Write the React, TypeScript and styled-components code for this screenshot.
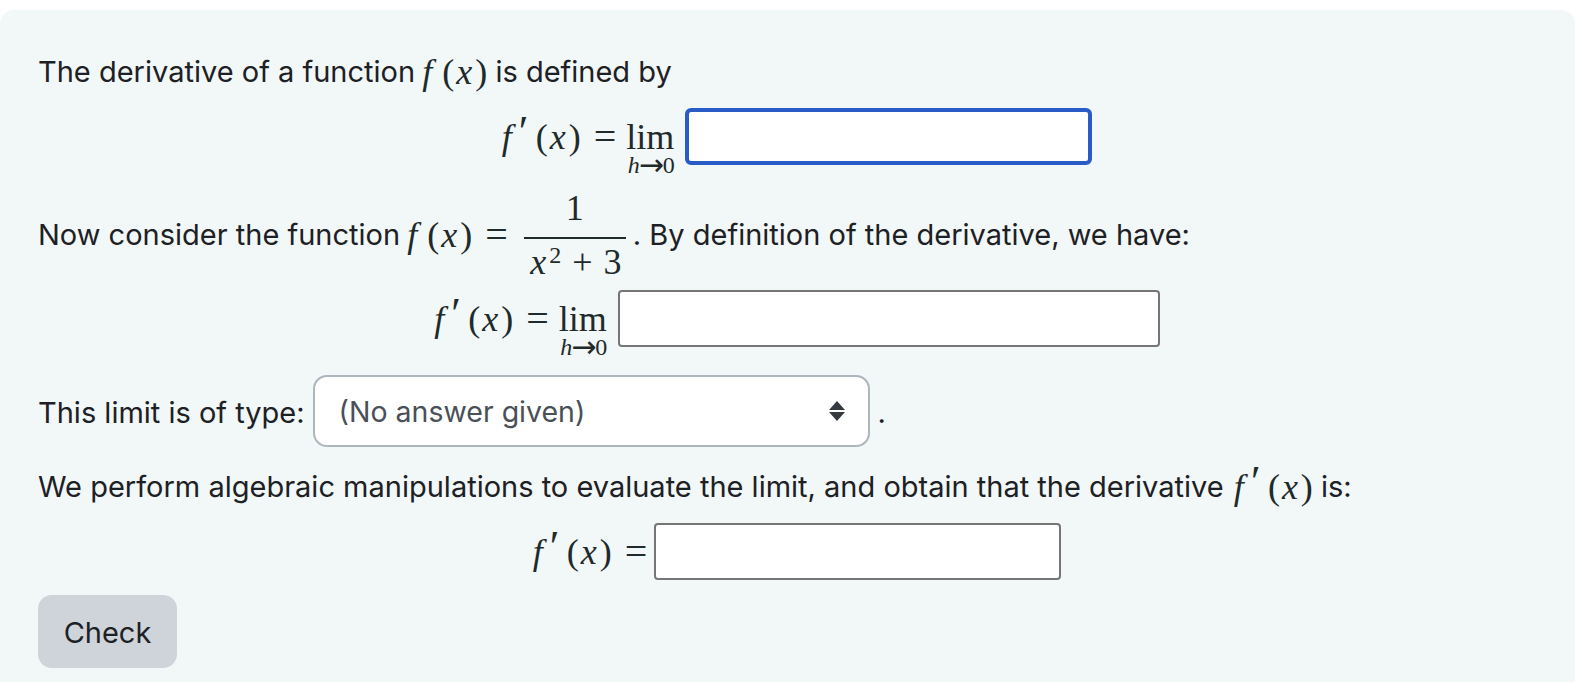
import * as React from 'react';
import styled, { createGlobalStyle } from 'styled-components';

const GlobalStyle = createGlobalStyle`
    html, body {
        margin: 0;
        padding: 0;
        height: 100%;
        background: #ffffff;
        overflow: hidden;
    }
    body {
        font-family: Inter, "Open Sans", sans-serif;
        color: #1d2125;
    }
`;

const Panel = styled.main`
    box-sizing: border-box;
    height: 672px;
    margin-top: 10px;
    padding: 39px 18px 0 38px;
    background: #f2f7f7;
    border-radius: 14px 14px 0 0;
    display: flex;
    flex-direction: column;
    font-size: 29px;
`;

const TextRow = styled.div<{ $top?: number }>`
    display: flex;
    align-items: center;
    height: 45px;
    margin-top: ${(props) => props.$top ?? 0}px;
    white-space: pre;
`;

const DisplayRow = styled.div<{ $top: number }>`
    display: flex;
    justify-content: center;
    align-items: flex-start;
    height: 57px;
    margin-top: ${(props) => props.$top}px;
`;

const MathText = styled.span`
    font-family: "Liberation Serif", serif;
    font-size: 36px;
    color: #1f2a2a;
    white-space: pre;
    display: inline-flex;
    align-items: center;
`;

const InlineDerivative = styled(MathText)`
    margin-left: 3px;
`;

const FName = styled.i<{ $gap?: number }>`
    font-style: italic;
    margin: 0 ${(props) => props.$gap ?? 5}px 0 -1px;
`;

const XName = styled.i`
    font-style: italic;
    margin: 0 3px 0 2px;
`;

const Prime = styled.span`
    display: inline-block;
    width: 10px;
    font-size: 44px;
    line-height: 1;
    margin: 0 7px 0 2px;
    transform: translateY(-5px);
`;

const Equals = styled.span<{ $tail?: boolean }>`
    font-size: 40px;
    line-height: 1;
    margin: 0 ${(props) => (props.$tail ? -4 : 10)}px 0 13px;
`;

const LimBlock = styled.span`
    display: inline-flex;
    flex-direction: column;
    align-items: center;
    height: 57px;
`;

const LimWord = styled.span`
    line-height: 40px;
    margin-top: 9px;
`;

const LimSub = styled.span`
    display: inline-flex;
    align-items: center;
    font-size: 24px;
    line-height: 24px;
    margin: -4px -3px 0 -1px;
`;

const LimVar = styled.i`
    font-style: italic;
`;

const Arrow = styled.span`
    font-family: "DejaVu Sans", sans-serif;
    font-size: 30px;
    margin: 0 -1px;
`;

const MathLine = styled(MathText)`
    height: 57px;
    margin-right: 11px;
`;

const Fraction = styled.span`
    display: inline-flex;
    flex-direction: column;
    align-items: center;
    width: 102px;
    margin: 0 7px 0 6px;
`;

const Numerator = styled.span`
    height: 48px;
    line-height: 38px;
`;

const Denominator = styled.span`
    align-self: stretch;
    text-align: center;
    border-top: 2px solid #1f2a2a;
    height: 42px;
    line-height: 46px;
`;

const Sup = styled.sup`
    font-size: 24px;
    line-height: 0;
    vertical-align: 11px;
`;

const Plus = styled.span`
    margin: 0 11px;
`;

const AnswerInput = styled.input<{ $width: number; $focused?: boolean }>`
    box-sizing: border-box;
    width: ${(props) => props.$width}px;
    height: 57px;
    background: #ffffff;
    border: ${(props) => (props.$focused ? '4px solid #2a5cc8' : '2px solid #767676')};
    border-radius: ${(props) => (props.$focused ? '6px' : '4px')};
    outline: none;
    padding: 0;
`;

const SelectWrap = styled.span`
    position: relative;
    display: inline-flex;
    margin: 0 8px 0 8px;
`;

const TypeSelect = styled.select`
    appearance: none;
    box-sizing: border-box;
    width: 557px;
    height: 72px;
    padding: 2px 24px 0;
    background: #ffffff;
    border: 2px solid #adb5bd;
    border-radius: 14px;
    color: #495057;
    font-family: Inter, "Open Sans", sans-serif;
    font-size: 28.5px;
    outline: none;
`;

const SelectArrows = styled.svg`
    position: absolute;
    right: 25px;
    top: 26px;
    width: 16px;
    height: 20px;
    pointer-events: none;
`;

const CheckButton = styled.button`
    box-sizing: border-box;
    align-self: flex-start;
    width: 139px;
    height: 73px;
    margin-top: 15px;
    background: #ced4da;
    border: none;
    border-radius: 14px;
    color: #1d2125;
    font-family: Inter, "Open Sans", sans-serif;
    font-size: 29px;
    padding: 2px 0 0;
`;

const TypeLabel = styled.span`
    padding-top: 3px;
`;

const FunctionOfX = () => (
    <MathText>
        <FName $gap={10}>f</FName>(<XName>x</XName>)
    </MathText>
);

const DerivativeOfX = () => (
    <>
        <FName>f</FName>
        <Prime>′</Prime>(<XName>x</XName>)
    </>
);

const Limit = () => (
    <LimBlock>
        <LimWord>lim</LimWord>
        <LimSub>
            <LimVar>h</LimVar>
            <Arrow>→</Arrow>0
        </LimSub>
    </LimBlock>
);

const App = (): JSX.Element => {
    return (
        <>
            <GlobalStyle />
            <Panel>
                <TextRow>
                    The derivative of a function <FunctionOfX /> is defined by
                </TextRow>
                <DisplayRow $top={14}>
                    <MathLine>
                        <DerivativeOfX />
                        <Equals>=</Equals>
                        <Limit />
                    </MathLine>
                    <AnswerInput $width={407} $focused aria-label="Difference quotient" />
                </DisplayRow>
                <TextRow $top={47}>
                    Now consider the function <FunctionOfX />
                    <MathText>
                        <Equals>=</Equals>
                        <Fraction>
                            <Numerator>1</Numerator>
                            <Denominator>
                                <XName>x</XName>
                                <Sup>2</Sup>
                                <Plus>+</Plus>3
                            </Denominator>
                        </Fraction>
                    </MathText>
                    . By definition of the derivative, we have:
                </TextRow>
                <DisplayRow $top={33}>
                    <MathLine>
                        <DerivativeOfX />
                        <Equals>=</Equals>
                        <Limit />
                    </MathLine>
                    <AnswerInput $width={542} aria-label="Limit expression" />
                </DisplayRow>
                <TextRow $top={41}>
                    <TypeLabel>This limit is of type:</TypeLabel>
                    <SelectWrap>
                        <TypeSelect aria-label="Limit type" defaultValue="none">
                            <option value="none">(No answer given)</option>
                        </TypeSelect>
                        <SelectArrows viewBox="0 0 16 20">
                            <path d="M8 0L16 9H0z M8 20L0 11H16z" fill="#343a40" />
                        </SelectArrows>
                    </SelectWrap>
                    <TypeLabel>.</TypeLabel>
                </TextRow>
                <TextRow $top={31}>
                    We perform algebraic manipulations to evaluate the limit, and obtain that the derivative{' '}
                    <InlineDerivative>
                        <DerivativeOfX />
                    </InlineDerivative>
                    {' is:'}
                </TextRow>
                <DisplayRow $top={14}>
                    <MathLine>
                        <DerivativeOfX />
                        <Equals $tail>=</Equals>
                    </MathLine>
                    <AnswerInput $width={407} aria-label="Derivative" />
                </DisplayRow>
                <CheckButton type="button">Check</CheckButton>
            </Panel>
        </>
    );
};

export default App;
